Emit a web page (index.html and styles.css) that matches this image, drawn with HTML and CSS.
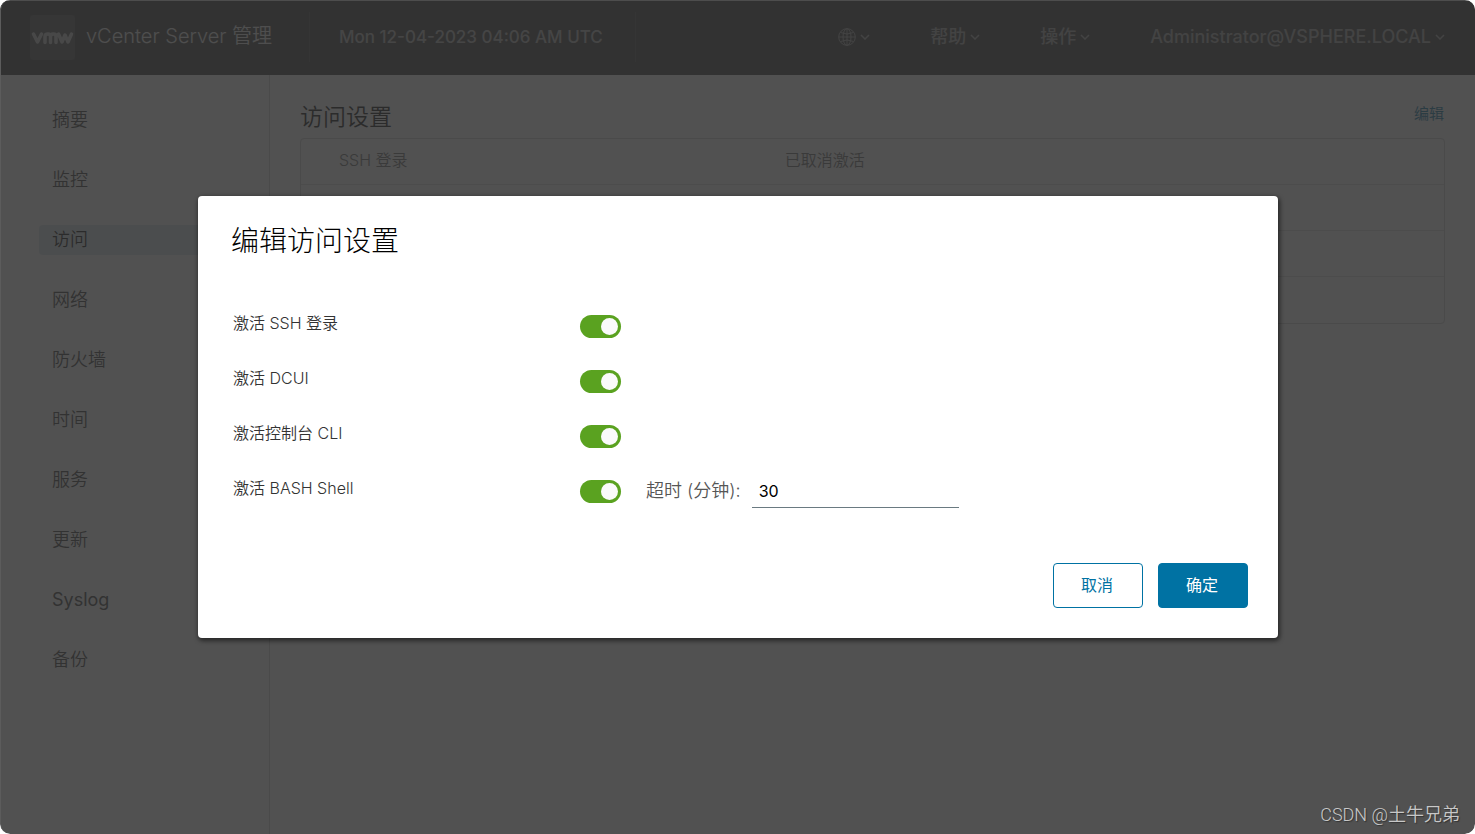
FILE: index.html
```html
<!DOCTYPE html>
<html lang="zh-CN">
<head>
    <meta charset="UTF-8">
    <meta name="viewport" content="width=device-width, initial-scale=1.0">
    <title>vCenter Server 管理</title>
    <link rel="stylesheet" href="styles.css">
</head>
<body>

    <div class="app">
        <header class="header">
            <div class="branding">
                <svg class="logo" viewBox="0 0 45 45" aria-hidden="true">
                    <rect width="45" height="45" rx="3" fill="#4a4a4a"/>
                    <path d="M3.500 19L7.500 27L11.500 19M15 27.500V21.500Q15 19 18 19Q20.500 19 20.500 21.500V27.500M20.500 21.500Q20.500 19 23.500 19Q26 19 26 21.500V27.500M28.500 19L32 27L35 20L38 27L41.500 19" fill="none" stroke="#c4c4c4" stroke-width="3.500" stroke-linecap="round" stroke-linejoin="round"/>
                </svg>
                <span class="title">vCenter Server 管理</span>
            </div>
            <div class="clock">Mon 12-04-2023 04:06 AM UTC</div>
            <nav class="header-menu">
                <button class="menu-btn" aria-label="语言">
                    <svg class="globe" viewBox="0 0 18 18">
                        <circle cx="9" cy="9" r="8.300"/>
                        <ellipse cx="9" cy="9" rx="4" ry="8.300"/>
                        <path d="M9 1V17M1 9H17M2.500 4.500Q9 7.500 15.500 4.500M2.500 13.500Q9 10.500 15.500 13.500"/>
                    </svg>
                    <svg class="chevron" viewBox="0 0 10 6"><path d="M1 1L5 5L9 1"/></svg>
                </button>
                <button class="menu-btn">帮助 <svg class="chevron" viewBox="0 0 10 6"><path d="M1 1L5 5L9 1"/></svg></button>
                <button class="menu-btn">操作 <svg class="chevron" viewBox="0 0 10 6"><path d="M1 1L5 5L9 1"/></svg></button>
                <button class="menu-btn">Administrator@VSPHERE.LOCAL <svg class="chevron" viewBox="0 0 10 6"><path d="M1 1L5 5L9 1"/></svg></button>
            </nav>
        </header>

        <div class="main">
            <nav class="sidebar">
                <a href="#" class="nav-link">摘要</a>
                <a href="#" class="nav-link">监控</a>
                <a href="#" class="nav-link active">访问</a>
                <a href="#" class="nav-link">网络</a>
                <a href="#" class="nav-link">防火墙</a>
                <a href="#" class="nav-link">时间</a>
                <a href="#" class="nav-link">服务</a>
                <a href="#" class="nav-link">更新</a>
                <a href="#" class="nav-link latin">Syslog</a>
                <a href="#" class="nav-link">备份</a>
            </nav>

            <section class="content">
                <div class="content-head">
                    <h2>访问设置</h2>
                    <a href="#" class="edit-link">编辑</a>
                </div>
                <table class="settings">
                    <tr><th>SSH 登录</th><td>已取消激活</td></tr>
                    <tr><th></th><td></td></tr>
                    <tr><th></th><td></td></tr>
                    <tr><th></th><td></td></tr>
                </table>
            </section>
        </div>

        <!-- Edit dialog -->
        <div class="backdrop">
            <form class="modal" role="dialog" aria-labelledby="modal-title">
                <h3 id="modal-title">编辑访问设置</h3>

                <div class="form-rows">
                    <div class="form-row">
                        <label class="row-label" for="ssh">激活 SSH 登录</label>
                        <input type="checkbox" class="toggle" id="ssh" checked>
                    </div>
                    <div class="form-row">
                        <label class="row-label" for="dcui">激活 DCUI</label>
                        <input type="checkbox" class="toggle" id="dcui" checked>
                    </div>
                    <div class="form-row">
                        <label class="row-label" for="cli">激活控制台 CLI</label>
                        <input type="checkbox" class="toggle" id="cli" checked>
                    </div>
                    <div class="form-row">
                        <label class="row-label" for="bash">激活 BASH Shell</label>
                        <input type="checkbox" class="toggle" id="bash" checked>
                        <label class="timeout-label" for="timeout">超时 (分钟):</label>
                        <input type="text" class="timeout" id="timeout" value="30">
                    </div>
                </div>

                <div class="modal-footer">
                    <button type="button" class="button">取消</button>
                    <button type="button" class="button primary">确定</button>
                </div>
            </form>
        </div>

        <div class="watermark">CSDN @土牛兄弟</div>
    </div>

</body>
</html>
```
FILE: styles.css
```css
* {
    box-sizing: border-box;
}

body {
    margin: 0;
    background-color: #fff;
    font-family: Inter, "Noto Sans CJK SC", sans-serif;
    font-size: 16px;
    color: #333;
}

button,
input {
    font-family: inherit;
    margin: 0;
}

.app {
    position: relative;
    display: flex;
    flex-direction: column;
    min-height: 100vh;
    border-radius: 10px;
    overflow: hidden;
    background-color: #fafafa;
}

/* Header */
.header {
    display: flex;
    align-items: center;
    height: 75px;
    padding: 0 30px 2px;
    background-color: #333;
    border-top: 1px solid #e0e0e0;
    color: #fafafa;
}

.branding {
    display: flex;
    align-items: center;
    gap: 11px;
    width: 280px;
    height: 50px;
    border-right: 1px solid #484848;
}

.logo {
    width: 45px;
    height: 45px;
}

.title {
    font-size: 20px;
    font-weight: 350;
    line-height: 26px;
    padding-bottom: 2px;
    white-space: nowrap;
    color: #e6e6e6;
}

.clock {
    display: flex;
    align-items: center;
    height: 50px;
    padding: 0 32px 0 29px;
    border-right: 1px solid #484848;
    font-size: 17px;
    font-weight: 500;
    white-space: nowrap;
    color: #b0b0b0;
}

.header-menu {
    display: flex;
    gap: 60px;
    margin-left: auto;
}

.menu-btn {
    display: flex;
    align-items: center;
    gap: 4px;
    padding: 0;
    border: none;
    background: none;
    font-size: 18px;
    font-weight: 500;
    line-height: 26px;
    white-space: nowrap;
    color: #a0a0a0;
}

.globe {
    width: 18px;
    height: 18px;
    fill: none;
    stroke: currentColor;
}

.chevron {
    width: 10px;
    height: 6px;
    fill: none;
    stroke: currentColor;
    stroke-width: 1.5;
}

/* Page */
.main {
    display: flex;
    flex: 1;
}

.sidebar {
    display: flex;
    flex-direction: column;
    gap: 30px;
    width: 270px;
    padding: 30px 0 30px 39px;
    border-right: 1px solid #ccc;
}

.nav-link {
    height: 30px;
    padding-left: 13px;
    border-radius: 4px 0 0 4px;
    font-size: 18px;
    font-weight: 350;
    line-height: 30px;
    color: #333;
    text-decoration: none;
}

.nav-link.active {
    background-color: #d8e3e9;
    color: #000;
}

.nav-link.latin {
    font-weight: 400;
}

.content {
    flex: 1;
    padding: 24px 30px;
}

.content-head {
    display: flex;
    justify-content: space-between;
    margin-bottom: 3px;
}

h2 {
    margin: 0;
    font-size: 23px;
    font-weight: 350;
    line-height: 36px;
    color: #000;
}

.edit-link {
    padding-right: 1px;
    font-size: 15px;
    line-height: 30px;
    color: #0072a3;
    text-decoration: none;
}

.settings {
    width: 100%;
    border: 1px solid #ccc;
    border-radius: 4px;
    border-spacing: 0;
}

.settings th,
.settings td {
    height: 46px;
    padding: 0 38px 6px;
    border-bottom: 1px solid #dedede;
    font-weight: 350;
    text-align: left;
    color: #666;
}

.settings th {
    width: 39%;
}

.settings tr:last-child th,
.settings tr:last-child td {
    border-bottom: none;
}

/* Dialog */
.backdrop {
    position: absolute;
    inset: 0;
    display: flex;
    align-items: center;
    justify-content: center;
    border-left: 1px solid #5c5c5c;
    border-radius: 10px;
    background-color: rgba(51, 51, 51, 0.85);
}

.modal {
    width: 1080px;
    max-width: 94%;
    padding: 30px;
    border-radius: 4px;
    background-color: #fff;
    box-shadow: 1px 2px 4px 1px rgba(0, 0, 0, 0.5);
}

h3 {
    margin: 0 0 55px;
    padding-left: 3px;
    font-size: 28px;
    font-weight: 300;
    line-height: 30px;
    color: #000;
}

.form-rows {
    padding-left: 5px;
}

.form-row {
    display: flex;
    align-items: flex-start;
    height: 55px;
}

.row-label {
    width: 347px;
    font-size: 16px;
    font-weight: 350;
    line-height: 24px;
}

.toggle {
    appearance: none;
    width: 41px;
    height: 23px;
    margin-top: 4px;
    padding: 3px;
    border-radius: 12px;
    background-color: #aaa;
}

.toggle::before {
    content: "";
    display: block;
    width: 17px;
    height: 17px;
    border-radius: 50%;
    background-color: #fafafa;
}

.toggle:checked {
    background-color: #5aa220;
}

.toggle:checked::before {
    margin-left: 18px;
}

.timeout-label {
    margin-left: 25px;
    font-size: 18px;
    font-weight: 350;
    line-height: 30px;
    color: #565656;
}

.timeout {
    width: 207px;
    height: 32px;
    margin-left: 11px;
    padding: 0 7px 2px;
    border: none;
    border-bottom: 1px solid #6a7a81;
    background: none;
    font-size: 16px;
    color: #000;
}

.modal-footer {
    display: flex;
    justify-content: flex-end;
    gap: 15px;
    margin-top: 32px;
}

.button {
    width: 90px;
    height: 45px;
    padding: 0 2px 3px 0;
    border: 1px solid #0072a3;
    border-radius: 4px;
    background-color: #fff;
    font-size: 16px;
    color: #0072a3;
}

.button.primary {
    background-color: #0072a3;
    color: #fff;
}

.watermark {
    position: absolute;
    right: 15px;
    bottom: 6px;
    font-family: Roboto, "Noto Sans CJK SC", sans-serif;
    font-size: 18px;
    font-weight: 350;
    line-height: 26px;
    color: #c8c8c8;
    text-shadow: 1px 1px 1px #333;
}
```
